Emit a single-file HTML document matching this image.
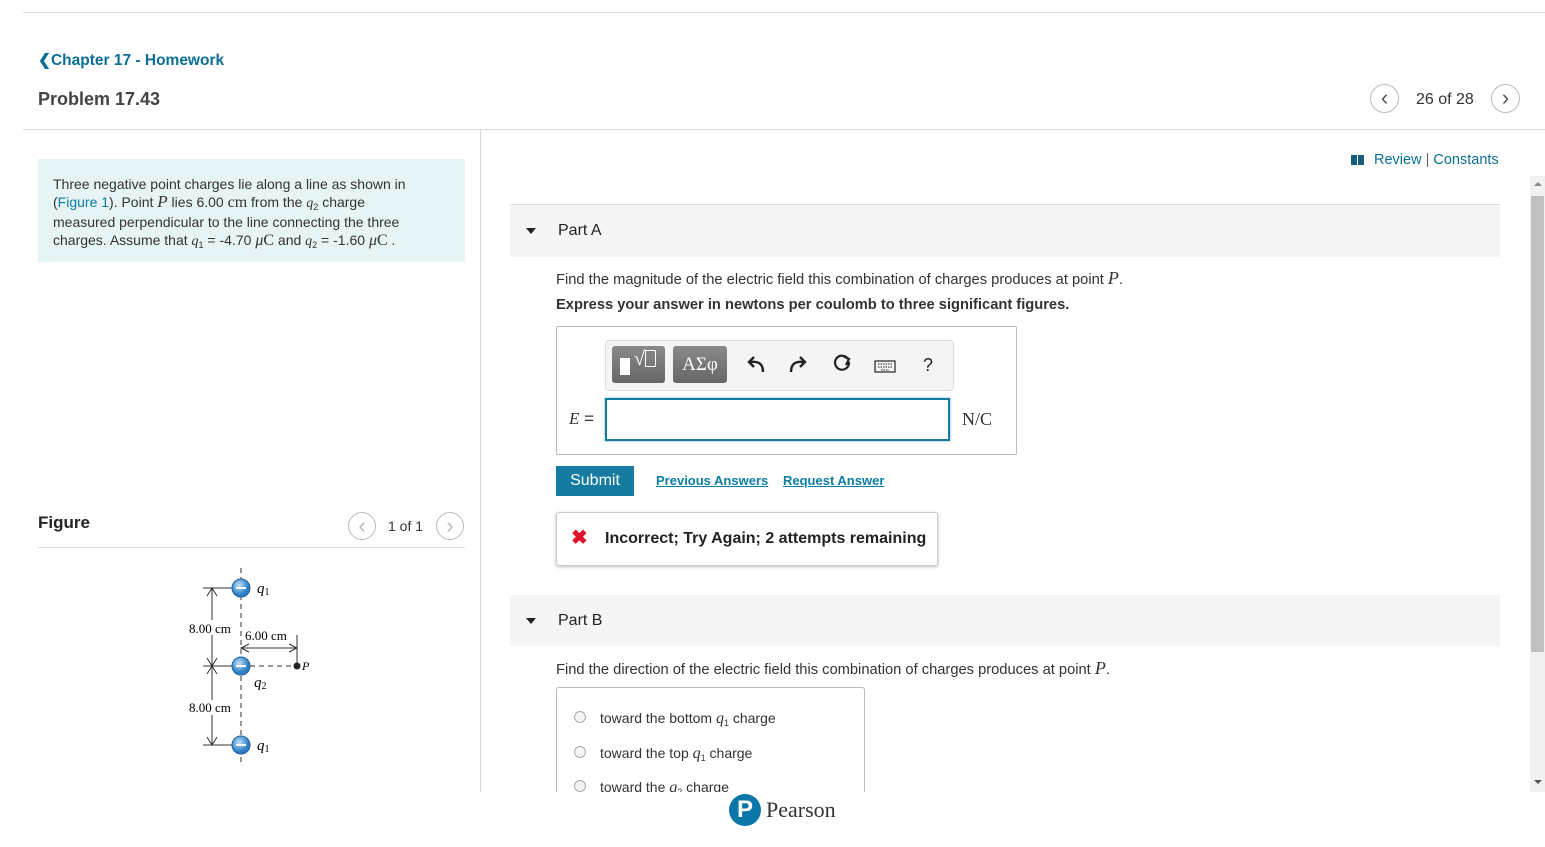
<!DOCTYPE html><html><head><style>
body{margin:0;width:1545px;height:847px;position:relative;font-family:"Liberation Sans",sans-serif;background:#fff;color:#333;overflow:hidden}
.a{position:absolute}
.m{font-family:"Liberation Serif",serif;font-style:italic}
sub{vertical-align:-3px;line-height:0}
a{color:#0b7ea3;text-decoration:none}
.circ{position:absolute;width:29px;height:29px;border:1px solid #bbb;border-radius:50%;box-sizing:border-box;text-align:center;line-height:25px;color:#555;font-size:22px}
.radio{position:absolute;width:12px;height:12px;border:1px solid #aaa;border-radius:50%;box-sizing:border-box;background:#f4f4f4}
</style></head><body>
<div class="a" style="left:23px;top:12px;width:1522px;height:1px;background:#ddd"></div>
<div class="a" style="left:38px;top:51px;font-size:15.5px;font-weight:bold;color:#0b6f93">&#10094;Chapter 17 - Homework</div>
<div class="a" style="left:38px;top:89px;font-size:18px;font-weight:bold;color:#444">Problem 17.43</div>
<div class="circ" style="left:1370px;top:84px">&lsaquo;</div>
<div class="a" style="left:1416px;top:91px;font-size:16px;color:#333">26 of 28</div>
<div class="circ" style="left:1491px;top:84px">&rsaquo;</div>
<div class="a" style="left:23px;top:129px;width:1522px;height:1px;background:#ddd"></div>
<div class="a" style="left:480px;top:129px;width:1px;height:663px;background:#cfd8e0"></div>
<div class="a" style="left:38px;top:159px;width:427px;height:103px;background:#e6f4f6"></div>
<div class="a" style="left:53px;top:175px;width:372px;font-size:14px;line-height:18px;color:#333">Three negative point charges lie along a line as shown in (<a>Figure 1</a>). Point <span class="m" style="font-size:17px;line-height:0">P</span> lies 6.00 <span style="font-family:'Liberation Serif';font-size:16px;line-height:0">cm</span> from the <span class="m">q</span><sub style="font-size:9px">2</sub> charge measured perpendicular to the line connecting the three charges. Assume that <span class="m">q</span><sub style="font-size:9px">1</sub> = -4.70 <span class="m" style="font-size:16px;line-height:0">μ</span><span style="font-family:'Liberation Serif';font-size:16px;line-height:0">C</span> and <span class="m">q</span><sub style="font-size:9px">2</sub> = -1.60 <span class="m" style="font-size:16px;line-height:0">μ</span><span style="font-family:'Liberation Serif';font-size:16px;line-height:0">C</span> .</div>
<div class="a" style="left:38px;top:513px;font-size:17px;font-weight:bold;color:#222">Figure</div>
<div class="circ" style="left:348px;top:512px;width:28px;height:28px;color:#bbb">&lsaquo;</div>
<div class="a" style="left:388px;top:518px;font-size:14px">1 of 1</div>
<div class="circ" style="left:436px;top:512px;width:28px;height:28px;color:#bbb">&rsaquo;</div>
<div class="a" style="left:38px;top:547px;width:427px;height:1px;background:#ddd"></div>
<svg class="a" style="left:180px;top:560px" width="150" height="210" font-family="Liberation Serif" font-size="13">
<defs><radialGradient id="g" cx="40%" cy="35%"><stop offset="0" stop-color="#bfe0f7"/><stop offset="1" stop-color="#2f7fc6"/></radialGradient></defs>
<line x1="61" y1="8" x2="61" y2="205" stroke="#333" stroke-dasharray="5,4"/>
<line x1="23" y1="28" x2="61" y2="28" stroke="#333"/><line x1="23" y1="106" x2="61" y2="106" stroke="#333"/><line x1="23" y1="185" x2="61" y2="185" stroke="#333"/>
<line x1="32" y1="28" x2="32" y2="185" stroke="#333"/>
<path d="M27 36L32 28L37 36M27 98L32 106L37 98M27 114L32 106L37 114M27 177L32 185L37 177" fill="none" stroke="#333"/>
<line x1="61" y1="88" x2="117" y2="88" stroke="#333"/><line x1="117" y1="75" x2="117" y2="106" stroke="#333"/>
<path d="M69 84L61 88L69 92M109 84L117 88L109 92" fill="none" stroke="#333"/>
<line x1="70" y1="106" x2="117" y2="106" stroke="#333" stroke-dasharray="5,4"/>
<circle cx="117" cy="106" r="3.5" fill="#222"/>
<g stroke="#1d5f9a"><circle cx="61" cy="28" r="9" fill="url(#g)"/><circle cx="61" cy="106" r="9" fill="url(#g)"/><circle cx="61" cy="185" r="9" fill="url(#g)"/></g>
<g stroke="#fff" stroke-width="2"><line x1="56" y1="28" x2="66" y2="28"/><line x1="56" y1="106" x2="66" y2="106"/><line x1="56" y1="185" x2="66" y2="185"/></g>
<rect x="8" y="60" width="52" height="15" fill="#fff"/><text x="9" y="73">8.00 cm</text>
<rect x="8" y="140" width="52" height="15" fill="#fff"/><text x="9" y="152">8.00 cm</text>
<text x="65" y="80">6.00 cm</text>
<text x="122" y="110" font-style="italic" font-size="12">P</text>
<text x="77" y="33" font-style="italic" font-size="15">q<tspan font-size="10" font-style="normal" dy="2">1</tspan></text>
<text x="74" y="127" font-style="italic" font-size="15">q<tspan font-size="10" font-style="normal" dy="2">2</tspan></text>
<text x="77" y="190" font-style="italic" font-size="15">q<tspan font-size="10" font-style="normal" dy="2">1</tspan></text>
</svg>
<div class="a" style="left:1351px;top:155px;width:6px;height:10px;background:#155e7d"></div><div class="a" style="left:1358px;top:155px;width:6px;height:10px;background:#155e7d"></div>
<div class="a" style="left:1374px;top:152px;font-size:14.5px;color:#0b6f93">Review <span style="color:#666">|</span> Constants</div>
<div class="a" style="left:1530px;top:176px;width:15px;height:616px;background:#f1f1f1"></div>
<div class="a" style="left:1531px;top:196px;width:13px;height:456px;background:#c1c1c1"></div>
<div class="a" style="left:1534px;top:182px;width:0;height:0;border:4px solid transparent;border-bottom-color:#888;border-top:0"></div>
<div class="a" style="left:1534px;top:780px;width:0;height:0;border:4px solid transparent;border-top-color:#555;border-bottom:0"></div>
<div class="a" style="left:510px;top:204px;width:990px;height:52px;background:#f5f5f5;border-top:1px solid #ddd"></div>
<div class="a" style="left:526px;top:228px;border:5px solid transparent;border-top:6px solid #222;border-bottom:0"></div>
<div class="a" style="left:558px;top:222px;font-size:16px;color:#222">Part A</div>
<div class="a" style="left:556px;top:268px;font-size:14.7px">Find the magnitude of the electric field this combination of charges produces at point <span class="m" style="font-size:18px">P</span>.</div>
<div class="a" style="left:556px;top:297px;font-size:14.7px;font-weight:bold;color:#333">Express your answer in newtons per coulomb to three significant figures.</div>
<div class="a" style="left:556px;top:326px;width:459px;height:127px;border:1px solid #bbb;border-radius:2px"></div>
<div class="a" style="left:605px;top:340px;width:347px;height:49px;background:#f4f4f4;border:1px solid #ddd;border-radius:4px"></div>
<div class="a" style="left:612px;top:346px;width:53px;height:37px;background:linear-gradient(#8a8a8a,#666);border-radius:3px"></div>
<div class="a" style="left:620px;top:358px;width:10px;height:17px;background:#fff"></div>
<div class="a" style="left:634px;top:348px;color:#fff;font-family:'Liberation Serif';font-size:20px">√<span style="display:inline-block;width:9px;height:15px;border:1px solid #fff;vertical-align:-2px"></span></div>
<div class="a" style="left:673px;top:346px;width:54px;height:37px;background:linear-gradient(#8a8a8a,#666);border-radius:3px;color:#fff;font-family:'Liberation Serif';font-size:19px;text-align:center;line-height:37px">ΑΣφ</div>
<svg class="a" style="left:745px;top:352px" width="200" height="26" fill="none" stroke="#222" stroke-width="2.4">
<path d="M18 20C18 12 14 9 5 10M9 5L4 10L9 15" /><path d="M46 20C46 12 50 9 59 10M55 5L60 10L55 15"/>
<path d="M103 7A7 7 0 1 0 104 10M98 4L104 7L101 13" stroke-width="2.2"/>
<rect x="130" y="9" width="20" height="11" stroke-width="1.2"/><path d="M133 12h14M133 15h14M136 18h8" stroke-width="1" stroke-dasharray="1.5,1"/>
<text x="178" y="19" fill="#222" stroke="none" font-family="Liberation Sans" font-size="18">?</text>
</svg>
<div class="a" style="left:569px;top:409px;font-size:17px"><span class="m">E</span> =</div>
<div class="a" style="left:605px;top:398px;width:345px;height:43px;border:2px solid #137aa0;box-sizing:border-box;box-shadow:0 0 2px #6ab"></div>
<div class="a" style="left:962px;top:409px;font-family:'Liberation Serif';font-size:18px;color:#333">N/C</div>
<div class="a" style="left:556px;top:466px;width:78px;height:30px;background:#167ba0;color:#fff;font-size:16px;text-align:center;line-height:30px">Submit</div>
<div class="a" style="left:656px;top:473px;font-size:13px;font-weight:bold;text-decoration:underline;color:#0b7ea3">Previous Answers</div>
<div class="a" style="left:783px;top:473px;font-size:13px;font-weight:bold;text-decoration:underline;color:#0b7ea3">Request Answer</div>
<div class="a" style="left:556px;top:512px;width:380px;height:52px;border:1px solid #ccc;border-radius:3px;box-shadow:0 1px 3px #bbb"></div>
<div class="a" style="left:571px;top:525px;color:#e0132a;font-size:20px;font-weight:bold">✖</div>
<div class="a" style="left:605px;top:530px;font-size:16px;font-weight:bold;color:#222">Incorrect; Try Again; 2 attempts remaining</div>
<div class="a" style="left:510px;top:595px;width:990px;height:51px;background:#f5f5f5"></div>
<div class="a" style="left:526px;top:618px;border:5px solid transparent;border-top:6px solid #222;border-bottom:0"></div>
<div class="a" style="left:558px;top:612px;font-size:16px;color:#222">Part B</div>
<div class="a" style="left:556px;top:658px;font-size:14.7px">Find the direction of the electric field this combination of charges produces at point <span class="m" style="font-size:18px">P</span>.</div>
<div class="a" style="left:556px;top:687px;width:307px;height:110px;border:1px solid #bbb;border-bottom:0;border-radius:3px"></div>
<div class="radio" style="left:574px;top:711px"></div><div class="a" style="left:600px;top:710px;font-size:14px">toward the bottom <span class="m" style="font-size:16px">q</span><sub style="font-size:9px">1</sub> charge</div>
<div class="radio" style="left:574px;top:746px"></div><div class="a" style="left:600px;top:745px;font-size:14px">toward the top <span class="m" style="font-size:16px">q</span><sub style="font-size:9px">1</sub> charge</div>
<div class="radio" style="left:574px;top:780px"></div><div class="a" style="left:600px;top:779px;font-size:14px">toward the <span class="m" style="font-size:16px">q</span><sub style="font-size:9px">2</sub> charge</div>
<div class="a" style="left:0;top:792px;width:1545px;height:55px;background:#fff"></div>
<div class="a" style="left:729px;top:794px;width:32px;height:32px;border-radius:50%;background:#0a77a8;color:#fff;font-size:24px;font-weight:bold;text-align:center;line-height:32px">P</div>
<div class="a" style="left:766px;top:797px;font-family:'Liberation Serif';font-size:22px;color:#333">Pearson</div>
</body></html>
